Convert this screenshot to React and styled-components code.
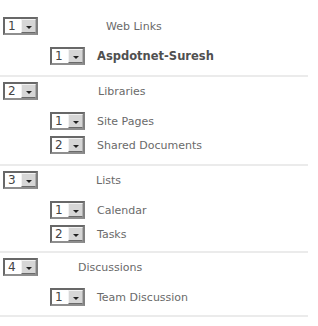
import React from "react";
import styled, { createGlobalStyle } from "styled-components";

const Global = createGlobalStyle`
  html, body { margin: 0; padding: 0; background: #fff; }
  body { font-family: "DejaVu Sans", Verdana, sans-serif; }
`;

const Page = styled.div`
  width: 318px;
  height: 326px;
  padding-top: 17px;
  box-sizing: border-box;
  display: flex;
  flex-direction: column;
`;

const Section = styled.div`
  display: flex;
  flex-direction: column;
  padding-top: ${(p) => (p.$first ? 0 : 5)}px;
`;

const Row = styled.div`
  display: flex;
  align-items: center;
  height: 18px;
  padding-left: ${(p) => (p.$child ? 50 : 3)}px;
`;

const Children = styled.div`
  display: flex;
  flex-direction: column;
  gap: 6px;
  margin-top: 12px;
`;

const SelectBox = styled.div`
  width: 35px;
  height: 18px;
  box-sizing: border-box;
  border: 2px solid #7a7a7a;
  border-top-color: #686868;
  border-left-color: #686868;
  border-bottom-color: #8e8e8e;
  border-right-color: #808080;
  background: #fff;
  display: flex;
  align-items: stretch;
  flex: none;
`;

const SelectValue = styled.span`
  flex: 1;
  font-size: 12px;
  line-height: 14px;
  color: #444;
  padding-left: 3px;
`;

const ArrowButton = styled.span`
  width: 15px;
  background: #d6d6d6;
  border-left: 1px solid #f2f2f2;
  border-top: 1px solid #f2f2f2;
  border-right: 1px solid #b0b0b0;
  border-bottom: 1px solid #6a6a6a;
  box-sizing: border-box;
  display: flex;
  align-items: center;
  justify-content: center;
  padding-top: 2px;
  &::after {
    content: "";
    border-left: 3px solid transparent;
    border-right: 3px solid transparent;
    border-top: 3px solid #222;
  }
`;

const Title = styled.span`
  margin-left: ${(p) => p.$offset}px;
  font-size: 11px;
  color: #6a6a6a;
  white-space: nowrap;
`;

const Label = styled.span`
  margin-left: 12px;
  font-size: ${(p) => (p.$bold ? 11.5 : 11)}px;
  font-weight: ${(p) => (p.$bold ? 700 : 400)};
  color: ${(p) => (p.$bold ? "#505050" : "#6a6a6a")};
  white-space: nowrap;
`;

const Separator = styled.div`
  width: 308px;
  height: 2px;
  background: #ebebeb;
  margin-top: ${(p) => p.$gap}px;
`;

const Select = ({ value }) => (
  <SelectBox>
    <SelectValue>{value}</SelectValue>
    <ArrowButton />
  </SelectBox>
);

const sections = [
  { n: 1, title: "Web Links", offset: 68, gap: 10, items: [{ label: "Aspdotnet-Suresh", bold: true }] },
  { n: 2, title: "Libraries", offset: 60, gap: 10, items: [{ label: "Site Pages" }, { label: "Shared Documents" }] },
  { n: 3, title: "Lists", offset: 58, gap: 8, items: [{ label: "Calendar" }, { label: "Tasks" }] },
  { n: 4, title: "Discussions", offset: 40, gap: 9, items: [{ label: "Team Discussion" }] },
];

export default function App() {
  return (
    <>
      <Global />
      <Page>
        {sections.map((s, i) => (
          <Section key={s.n} $first={i === 0}>
            <Row>
              <Select value={s.n} />
              <Title $offset={s.offset}>{s.title}</Title>
            </Row>
            <Children>
              {s.items.map((it, j) => (
                <Row $child key={it.label}>
                  <Select value={j + 1} />
                  <Label $bold={it.bold}>{it.label}</Label>
                </Row>
              ))}
            </Children>
            <Separator $gap={s.gap} />
          </Section>
        ))}
      </Page>
    </>
  );
}
